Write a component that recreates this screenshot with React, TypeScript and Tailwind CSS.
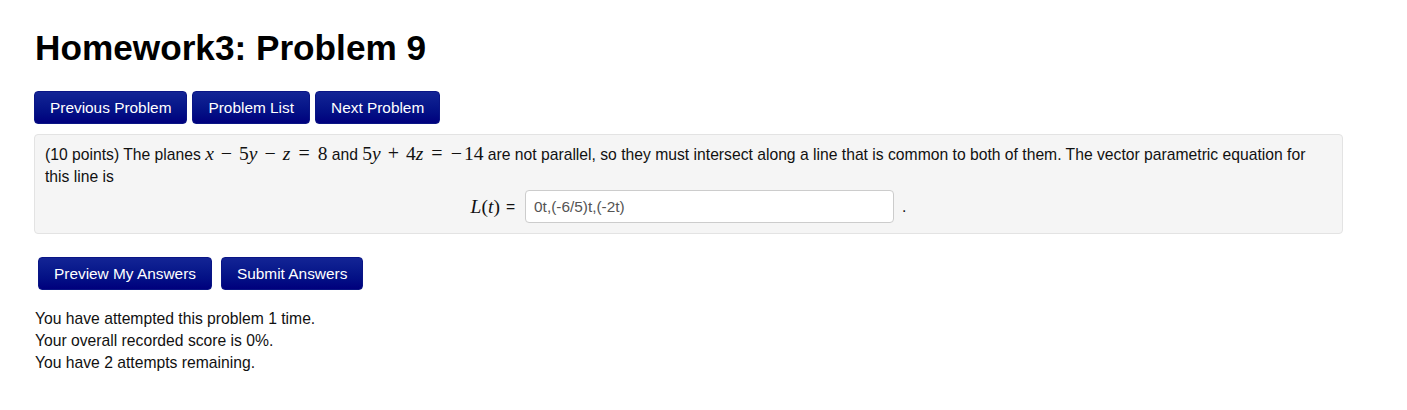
import React from "react";

const Btn = ({ children }: { children: React.ReactNode }) => (
  <button
    type="button"
    className="h-[33px] px-[15px] rounded-[4px] border border-[#0a1585] bg-gradient-to-b from-[#132495] to-[#00007d] text-white text-[15.4px] leading-[20px] font-['Liberation_Sans',Arial,sans-serif]"
  >
    {children}
  </button>
);

const V = ({ children }: { children: React.ReactNode }) => (
  <span className="italic">{children}</span>
);
const Bin = ({ children }: { children: React.ReactNode }) => (
  <span className="mx-[7px] text-[20px]">{children}</span>
);
const Rel = ({ children }: { children: React.ReactNode }) => (
  <span className="mx-[8px] text-[20px]">{children}</span>
);

const Math = ({ children }: { children: React.ReactNode }) => (
  <span className="font-['Liberation_Serif','Times_New_Roman',serif] text-[19.5px] leading-[20px] whitespace-nowrap">
    {children}
  </span>
);

export default function App() {
  return (
    <div className="min-h-screen bg-white pl-[35px] pt-[29px] font-['Liberation_Sans',Arial,sans-serif] text-[15.7px] leading-[22px] text-[#111111]">
      <h1 className="text-[35.2px] font-bold leading-[38px] text-black">Homework3: Problem 9</h1>

      <div className="mt-[24px] -ml-px flex gap-[5px]">
        <Btn>Previous Problem</Btn>
        <Btn>Problem List</Btn>
        <Btn>Next Problem</Btn>
      </div>

      <div className="mt-[10px] -ml-px w-[1309px] rounded-[4px] border border-[#e3e3e3] bg-[#f5f5f5] px-[10px] pt-[8px] pb-[10px]">
        <div className="whitespace-nowrap">
          (10 points) The planes{" "}
          <Math>
            <V>x</V>
            <Bin>−</Bin>5<V>y</V>
            <Bin>−</Bin>
            <V>z</V>
            <Rel>=</Rel>8
          </Math>{" "}
          and{" "}
          <Math>
            5<V>y</V>
            <Bin>+</Bin>4<V>z</V>
            <Rel>=</Rel>
            <span className="text-[20px] pr-[2px]">−</span>14
          </Math>{" "}
          are not parallel, so they must intersect along a line that is common to both of them. The vector parametric equation for
        </div>
        <div>this line is</div>
        <div className="mt-[2px] flex h-[33px] items-center justify-center">
          <Math>
            <V>L</V>(<V>t</V>)
          </Math>
          <span className="ml-[6px] mr-[10px]">=</span>
          <input
            type="text"
            readOnly
            value="0t,(-6/5)t,(-2t)"
            className="h-[33px] w-[369px] rounded-[4px] border border-[#cccccc] bg-white pl-[8px] text-[15.4px] text-[#555555] outline-none font-['Liberation_Sans',Arial,sans-serif]"
          />
          <span className="ml-[8px]">.</span>
        </div>
      </div>

      <div className="mt-[23px] ml-[3px] flex gap-[9px]">
        <Btn>Preview My Answers</Btn>
        <Btn>Submit Answers</Btn>
      </div>

      <div className="mt-[18px]">
        <div>You have attempted this problem 1 time.</div>
        <div>Your overall recorded score is 0%.</div>
        <div>You have 2 attempts remaining.</div>
      </div>
    </div>
  );
}
